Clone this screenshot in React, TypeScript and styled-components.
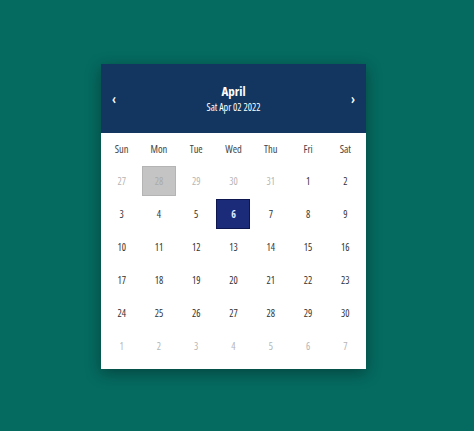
import React, { useState } from 'react';
import styled, { createGlobalStyle, css } from 'styled-components';

const GlobalStyle = createGlobalStyle`
  html, body {
    margin: 0;
    padding: 0;
    background: #056a60;
  }
  body {
    font-family: 'Open Sans', 'Liberation Sans', sans-serif;
    font-stretch: 75%;
  }
`;

const Page = styled.div`
  width: 474px;
  height: 431px;
  padding-top: 64px;
  padding-left: 101px;
  box-sizing: border-box;
`;

const Card = styled.div`
  width: 265px;
  background-color: #fff;
  box-shadow: 0 4px 14px rgba(0, 0, 0, 0.35);
  padding-bottom: 5px;
`;

const Header = styled.div`
  height: 69px;
  background-color: #12365f;
  display: flex;
  align-items: center;
  justify-content: space-between;
  padding: 0 9px;
  color: #fff;
`;

const Arrow = styled.button`
  border: none;
  background: none;
  color: #fff;
  font-family: inherit;
  font-stretch: inherit;
  font-size: 14px;
  font-weight: 600;
  padding: 0 2px;
  cursor: pointer;
`;

const Title = styled.div`
  display: flex;
  flex-direction: column;
  align-items: center;
`;

const Month = styled.div`
  font-size: 13px;
  font-weight: 700;
  line-height: 17px;
`;

const SubDate = styled.div`
  font-size: 10px;
  line-height: 14px;
`;

const Grid = styled.div`
  display: grid;
  grid-template-columns: repeat(7, 1fr);
  grid-auto-rows: 33px;
  padding: 0 2px;
`;

const WeekDay = styled.div`
  height: 32px;
  display: flex;
  align-items: center;
  justify-content: center;
  font-size: 10.5px;
  color: #444;
  grid-row: 1;
`;

const Cell = styled.div`
  display: flex;
  align-items: flex-start;
  justify-content: center;
`;

const Day = styled.button<{ $muted?: boolean; $hover?: boolean; $selected?: boolean }>`
  width: 34px;
  height: 30px;
  border: 1px solid transparent;
  background: none;
  font-family: inherit;
  font-stretch: inherit;
  font-size: 10px;
  color: #333;
  padding: 0;
  cursor: pointer;
  ${(p) =>
    p.$muted &&
    css`
      color: #b5b5b5;
    `}
  ${(p) =>
    p.$hover &&
    css`
      background-color: #c4c4c4;
      border-color: #b4b4b4;
      color: #aaa;
    `}
  ${(p) =>
    p.$selected &&
    css`
      background-color: #1c2a7a;
      border-color: #0e1650;
      color: #dfe6ff;
      font-weight: 700;
    `}
`;

const weekDays = ['Sun', 'Mon', 'Tue', 'Wed', 'Thu', 'Fri', 'Sat'];

type DayItem = { n: number; muted: boolean };

const buildDays = (): DayItem[] => {
  const days: DayItem[] = [];
  [27, 28, 29, 30, 31].forEach((n) => days.push({ n, muted: true }));
  for (let i = 1; i <= 30; i++) days.push({ n: i, muted: false });
  for (let i = 1; i <= 7; i++) days.push({ n: i, muted: true });
  return days;
};

const App = () => {
  const [selected, setSelected] = useState(10);
  const days = buildDays();

  return (
    <Page>
      <GlobalStyle />
      <Card>
        <Header>
          <Arrow>‹</Arrow>
          <Title>
            <Month>April</Month>
            <SubDate>Sat Apr 02 2022</SubDate>
          </Title>
          <Arrow>›</Arrow>
        </Header>
        <Grid>
          {weekDays.map((d) => (
            <WeekDay key={d}>{d}</WeekDay>
          ))}
          {days.map((d, i) => (
            <Cell key={i}>
              <Day
                $muted={d.muted}
                $hover={i === 1}
                $selected={i === selected}
                onClick={() => setSelected(i)}
              >
                {d.n}
              </Day>
            </Cell>
          ))}
        </Grid>
      </Card>
    </Page>
  );
};

export default App;
